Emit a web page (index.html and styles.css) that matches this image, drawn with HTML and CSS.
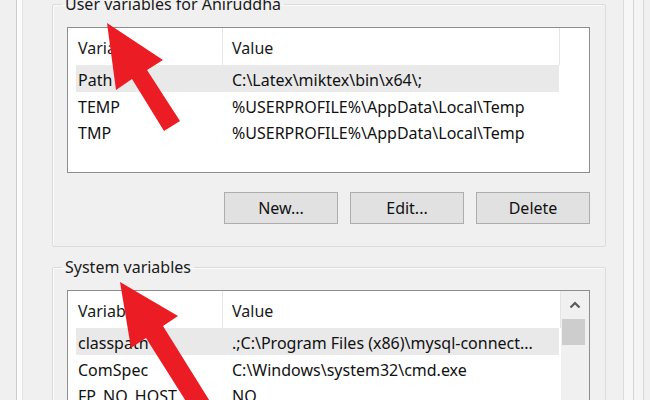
FILE: index.html
```html
<!DOCTYPE html>
<html>
<head>
<meta charset="utf-8">
<link rel="stylesheet" href="styles.css">
</head>
<body>
<div class="window">
  <div class="frame">
    <div class="content">
      <fieldset class="group group-user">
        <legend>User variables for Aniruddha</legend>
        <div class="listbox">
          <div class="list-main">
            <div class="list-header">
              <div class="hcell h-var">Variable</div>
              <div class="hcell h-val">Value</div>
              <div class="hcell h-fill"></div>
            </div>
            <div class="row selected"><div class="c-var">Path</div><div class="c-val">C:\Latex\miktex\bin\x64\;</div></div>
            <div class="row"><div class="c-var">TEMP</div><div class="c-val">%USERPROFILE%\AppData\Local\Temp</div></div>
            <div class="row"><div class="c-var">TMP</div><div class="c-val">%USERPROFILE%\AppData\Local\Temp</div></div>
          </div>
        </div>
        <div class="buttons">
          <button class="btn">New...</button>
          <button class="btn">Edit...</button>
          <button class="btn">Delete</button>
        </div>
      </fieldset>
      <fieldset class="group group-system">
        <legend>System variables</legend>
        <div class="listbox">
          <div class="list-main">
            <div class="list-header">
              <div class="hcell h-var">Variable</div>
              <div class="hcell h-val h-last">Value</div>
            </div>
            <div class="row selected"><div class="c-var">classpath</div><div class="c-val">.;C:\Program Files (x86)\mysql-connect...</div></div>
            <div class="row"><div class="c-var">ComSpec</div><div class="c-val">C:\Windows\system32\cmd.exe</div></div>
            <div class="row"><div class="c-var">FP_NO_HOST_C...</div><div class="c-val">NO</div></div>
          </div>
          <div class="scrollbar">
            <div class="sb-up">
              <svg width="12" height="8" viewBox="0 0 12 8"><path d="M1.5 6.5 L6 2 L10.5 6.5" fill="none" stroke="#5a5a5a" stroke-width="2.2"/></svg>
            </div>
            <div class="sb-thumb"></div>
          </div>
        </div>
      </fieldset>
    </div>
  </div>
</div>
<svg class="arrows" width="650" height="400" viewBox="0 0 650 400">
  <polygon points="107,23 163,60 147,70 180,121 164,131 132,79 116,90" fill="#ec1c24"/>
  <polygon points="120,282 178,316 163,326 211,403 194,414 146,338 131,348" fill="#ec1c24"/>
</svg>
</body>
</html>
```

FILE: styles.css
```css
* { box-sizing: border-box; }

body {
  margin: 0;
  width: 650px;
  height: 400px;
  overflow: hidden;
  position: relative;
  background: #f0f0f0;
  font-family: "Noto Sans", "Segoe UI", sans-serif;
  font-size: 16px;
  color: #111;
}

.window {
  margin-left: 16px;
  width: 628px;
  height: 400px;
  border-left: 1px solid #cdcdcd;
  border-right: 1px solid #d8d8d8;
  padding-right: 9px;
  background: #f5f5f5;
  display: flex;
}

.frame {
  flex: 1;
  display: flex;
  border-left: 5px solid #fcfcfc;
  border-right: 1px solid #d6d6d6;
  padding-right: 9px;
  background: #f7f7f7;
}

.content {
  flex: 1;
  border-left: 1px solid #e2e2e2;
  border-right: 1px solid #dcdcdc;
  padding: 0 17px 0 29px;
  background: #f0f0f0;
}

.group {
  margin: 0;
  min-width: 0;
  padding: 13px 15px 22px 14px;
  border: 1px solid #dcdcdc;
  border-radius: 2px;
  box-shadow: inset 1px 1px 0 #fafafa;
}

.group-user { margin-top: -6px; }
.group-system { margin-top: 10px; }

legend {
  padding: 0 3px;
  margin-left: -5px;
  line-height: 20px;
  color: #1a1a1a;
}

.listbox {
  height: 146px;
  border: 1px solid #8e8e8e;
  background: #fff;
  display: flex;
  overflow: hidden;
}

.list-main { flex: 1; }

.list-header {
  display: flex;
  height: 37px;
}

.hcell {
  display: flex;
  align-items: center;
  padding-top: 3px;
  border-right: 1px solid #e5e5e5;
  color: #1a1a1a;
}

.h-var { width: 155px; padding-left: 10px; }
.h-val { width: 337px; padding-left: 9px; }
.h-fill { flex: 1; border-right: 0; }
.h-last { flex: 1; width: auto; }

.row {
  display: flex;
  align-items: center;
  height: 26.75px;
  padding-top: 3px;
  width: 483px;
  margin-left: 8px;
  white-space: nowrap;
}

.row.selected { background: #e9e9e9; }

.c-var { width: 147px; padding-left: 2px; }
.c-val { padding-left: 9px; }

.scrollbar {
  width: 28px;
  background: #f0f0f0;
  display: flex;
  flex-direction: column;
  align-items: flex-start;
}

.sb-up {
  width: 27px;
  height: 28px;
  display: flex;
  align-items: center;
  justify-content: center;
}

.sb-thumb {
  margin-left: 1px;
  width: 23px;
  height: 26px;
  background: #cdcdcd;
}

.buttons {
  display: flex;
  justify-content: flex-end;
  gap: 12px;
  margin-top: 19px;
}

.btn {
  width: 114px;
  height: 32px;
  padding: 0;
  border: 1px solid #adadad;
  border-radius: 0;
  background: #e1e1e1;
  font-family: inherit;
  font-size: 16px;
  color: #111;
}

.arrows {
  position: absolute;
  left: 0;
  top: 0;
}
```
